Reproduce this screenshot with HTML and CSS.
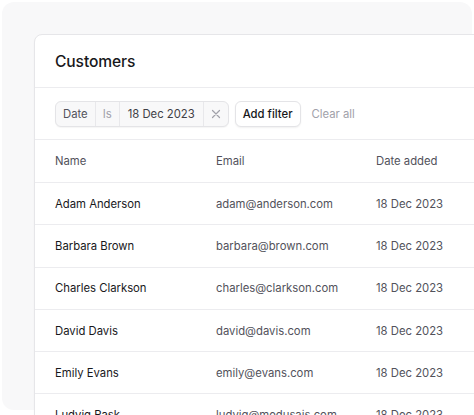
FILE: index.html
```html
<!DOCTYPE html>
<html lang="en">
<head>
<meta charset="utf-8">
<title>Customers</title>
<link rel="stylesheet" href="styles.css">
</head>
<body>
<div class="frame">
  <div class="card">
    <div class="card-header">
      <h1 class="title">Customers</h1>
    </div>
    <div class="filter-bar">
      <div class="chip">
        <span class="seg seg-label">Date</span>
        <span class="seg seg-op">Is</span>
        <span class="seg seg-value">18 Dec 2023</span>
        <span class="seg seg-remove">
          <svg width="10" height="10" viewBox="0 0 10 10" fill="none" stroke="currentColor" stroke-width="1.2" stroke-linecap="round"><path d="M1.5 1.5l7 7M8.5 1.5l-7 7"/></svg>
        </span>
      </div>
      <button class="btn-add">Add filter</button>
      <button class="btn-clear">Clear all</button>
    </div>
    <div class="table">
      <div class="row head">
        <div class="cell">Name</div>
        <div class="cell">Email</div>
        <div class="cell">Date added</div>
      </div>
      <div class="row">
        <div class="cell name">Adam Anderson</div>
        <div class="cell">adam@anderson.com</div>
        <div class="cell">18 Dec 2023</div>
      </div>
      <div class="row">
        <div class="cell name">Barbara Brown</div>
        <div class="cell">barbara@brown.com</div>
        <div class="cell">18 Dec 2023</div>
      </div>
      <div class="row">
        <div class="cell name">Charles Clarkson</div>
        <div class="cell">charles@clarkson.com</div>
        <div class="cell">18 Dec 2023</div>
      </div>
      <div class="row">
        <div class="cell name">David Davis</div>
        <div class="cell">david@davis.com</div>
        <div class="cell">18 Dec 2023</div>
      </div>
      <div class="row">
        <div class="cell name">Emily Evans</div>
        <div class="cell">emily@evans.com</div>
        <div class="cell">18 Dec 2023</div>
      </div>
      <div class="row">
        <div class="cell name">Ludvig Rask</div>
        <div class="cell">ludvig@medusajs.com</div>
        <div class="cell">18 Dec 2023</div>
      </div>
    </div>
  </div>
</div>
</body>
</html>
```

FILE: styles.css
```css
html, body {
  margin: 0;
  padding: 0;
  background: #ffffff;
  overflow: hidden;
  height: 100%;
}

body {
  font-family: Inter, "Noto Sans", sans-serif;
  font-size: 11.3px;
  color: #18181b;
}

.frame {
  margin: 2px;
  width: 470px;
  height: 408px;
  box-sizing: border-box;
  padding: 32px 0 0 32px;
  background: #f8f8f9;
  border-radius: 12px;
}

.card {
  width: 600px;
  background: #ffffff;
  border: 1px solid #e6e6e9;
  border-radius: 8px;
  box-shadow: 0 1px 2px rgba(0, 0, 0, 0.03);
}

.card-header {
  height: 52px;
  display: flex;
  align-items: center;
  padding: 0 20px;
  border-bottom: 1px solid #ececef;
}

.title {
  margin: 0;
  font-size: 15.6px;
  font-weight: 500;
  color: #18181b;
  letter-spacing: -0.1px;
}

.filter-bar {
  height: 51px;
  display: flex;
  align-items: center;
  padding: 0 20px;
  gap: 6px;
  border-bottom: 1px solid #ececef;
}

.chip {
  display: flex;
  height: 26px;
  box-sizing: border-box;
  border: 1px solid #e4e4e7;
  border-radius: 6px;
  background: #f8f8f9;
  overflow: hidden;
  box-shadow: 0 1px 1px rgba(0, 0, 0, 0.04);
}

.seg {
  display: flex;
  align-items: center;
  padding: 0 7px;
  color: #52525b;
  border-left: 1px solid #e8e8eb;
}

.seg-label {
  border-left: none;
}

.seg-op {
  color: #a1a1aa;
}

.seg-value {
  color: #3f3f46;
  padding: 0 8px;
}

.seg-remove {
  color: #a1a1aa;
  padding: 0 7px;
}

.btn-add {
  height: 26px;
  padding: 0 7px;
  font-family: inherit;
  font-size: 11.3px;
  font-weight: 500;
  color: #18181b;
  background: #ffffff;
  border: 1px solid #e4e4e7;
  border-radius: 6px;
  box-shadow: 0 1px 2px rgba(0, 0, 0, 0.06);
}

.btn-clear {
  height: 26px;
  padding: 0 5px;
  font-family: inherit;
  font-size: 11.3px;
  font-weight: 400;
  color: #a1a1aa;
  background: none;
  border: none;
}

.row {
  display: grid;
  grid-template-columns: 161px 160px 160px 1fr;
  height: 41.3px;
  align-items: center;
  border-bottom: 1px solid #ececef;
}

.row.head {
  height: 42px;
}

.cell {
  padding-left: 20px;
  color: #52525b;
  white-space: nowrap;
}

.cell.name {
  color: #18181b;
}
```
